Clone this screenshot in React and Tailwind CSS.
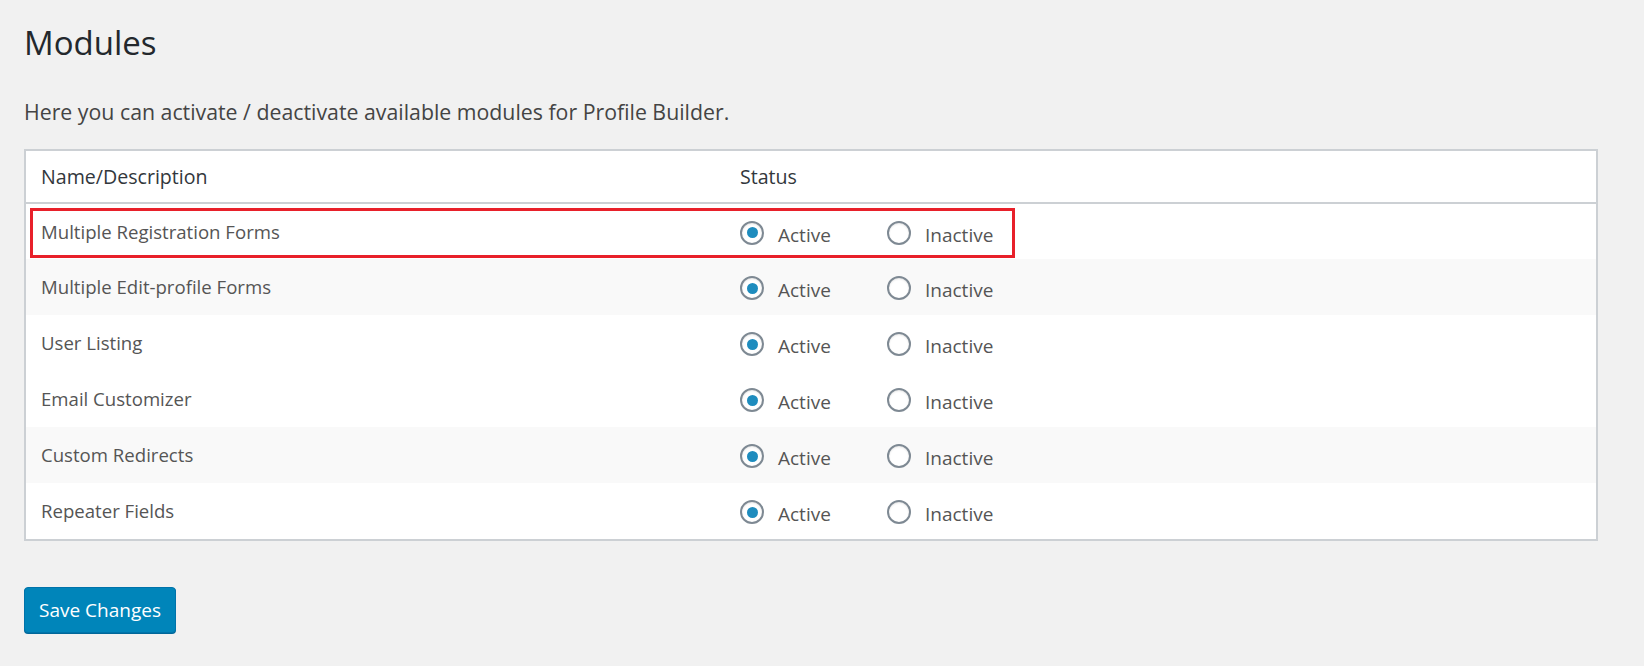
import React from 'react';

const modules = [
  { name: 'Multiple Registration Forms', shaded: false },
  { name: 'Multiple Edit-profile Forms', shaded: true },
  { name: 'User Listing', shaded: false },
  { name: 'Email Customizer', shaded: false },
  { name: 'Custom Redirects', shaded: true },
  { name: 'Repeater Fields', shaded: false },
];

const Radio = ({ checked }) => (
  <span className="flex items-center justify-center w-[24px] h-[24px] rounded-full border-2 border-[#7e8993] bg-white shadow-[inset_0_1px_2px_rgba(0,0,0,0.1)]">
    {checked && <span className="block w-[11px] h-[11px] rounded-full bg-[#1e8cbe]" />}
  </span>
);

const App = () => {
  return (
    <div className="min-h-screen bg-[#f1f1f1] px-[24px] pt-[20px] pb-[34px] font-['Open_Sans','Noto_Sans',sans-serif] text-[#444]">
      {/* Page title */}
      <h1 className="text-[33px] leading-[45px] font-normal text-[#23282d]">Modules</h1>

      <p className="mt-[32px] text-[21.3px] leading-[30px] text-[#444]">
        Here you can activate / deactivate available modules for Profile Builder.
      </p>

      {/* Modules table */}
      <div className="relative mt-[22px] w-[1574px] bg-white border-2 border-[#ccd0d4]">
        <table className="w-full border-collapse text-[19px]">
          <thead>
            <tr className="h-[52px] border-b-2 border-[#ccd0d4]">
              <th className="w-[700px] pl-[15px] text-left font-normal text-[#32373c] text-[19.6px]">Name/Description</th>
              <th className="pl-[14px] text-left font-normal text-[#32373c] text-[19.6px]">Status</th>
            </tr>
          </thead>
          <tbody>
            {modules.map((m) => (
              <tr key={m.name} className={`h-[56px] ${m.shaded ? 'bg-[#f9f9f9]' : 'bg-white'}`}>
                <td className="pl-[15px] text-[#555] text-[18.6px]">{m.name}</td>
                <td className="pl-[14px]">
                  <div className="flex items-center text-[#555] pt-[2px]">
                    <Radio checked />
                    <span className="ml-[14px] mt-[5px] w-[109px]">Active</span>
                    <Radio checked={false} />
                    <span className="ml-[14px] mt-[5px]">Inactive</span>
                  </div>
                </td>
              </tr>
            ))}
          </tbody>
        </table>

        {/* highlight around the first module */}
        <div className="absolute left-[4px] top-[57px] w-[985px] h-[50px] border-[3px] border-[#e8202a] pointer-events-none" />
      </div>

      <button className="mt-[46px] h-[46px] px-[14px] rounded-[4px] bg-[#0085ba] border border-[#0073aa] text-white text-[19px] shadow-[0_1px_0_#006799]">
        Save Changes
      </button>
    </div>
  );
};

export default App;
